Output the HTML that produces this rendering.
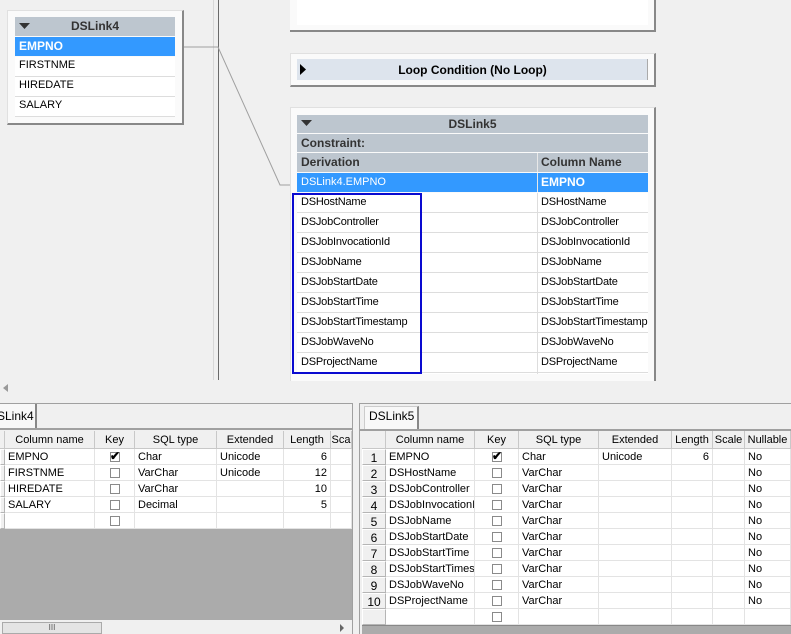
<!DOCTYPE html>
<html><head><meta charset="utf-8"><style>
*{margin:0;padding:0;box-sizing:border-box}
body{width:791px;height:634px;background:#f0f0f0;font-family:"Liberation Sans",sans-serif;font-size:11px;color:#000;position:relative;overflow:hidden}
.a{position:absolute}
.t{position:absolute;white-space:nowrap;line-height:20px}
.cell{position:absolute;height:16px;line-height:16px;white-space:nowrap;overflow:hidden;padding-left:3px;border-right:1px solid #e3e3e3;border-bottom:1px solid #e3e3e3;background:#fff}
.hd{position:absolute;height:18px;line-height:18px;text-align:center;white-space:nowrap;overflow:hidden;background:#f0f0f0;border-right:1px solid #c8c8c8;border-bottom:1px solid #c8c8c8}
.rn{position:absolute;height:16px;line-height:16px;text-align:center;background:#f0f0f0;border:1px solid #b5b5b5;border-top-color:#fff;border-left-color:#fff;font-size:12px}
.cb{position:absolute;width:10px;height:10px;border:1px solid #8a8a8a;background:#fff}
.f{font-size:11px}
</style></head><body>
<div class="a" style="left:213px;top:0;width:1px;height:380px;background:#d8d8d8"></div>
<div class="a" style="left:218px;top:0;width:1px;height:380px;background:#6a6a6a"></div>
<svg class="a" style="left:0;top:0" width="791" height="380"><polyline points="183,47 218,47 280,185 297,185" fill="none" stroke="#a0a0a0" stroke-width="1"/></svg>

<div class="a" style="left:7px;top:10px;width:177px;height:115px;background:#fafafa;border:1px solid #e0e0e0;border-right:2px solid #888;border-bottom:2px solid #888"></div>
<div class="a" style="left:15px;top:17px;width:160px;height:19px;background:#bdc6cf"></div>
<svg class="a" style="left:19px;top:23px" width="12" height="8"><polygon points="0,0 11,0 5.5,6" fill="#333"/></svg>
<div class="t" style="left:15px;top:16px;width:160px;text-align:center;font-weight:bold;color:#333;font-size:12px">DSLink4</div>
<div class="a" style="left:15px;top:37px;width:160px;height:19px;background:#3399ff"></div>
<div class="t" style="left:19px;top:36px;color:#fff;font-weight:bold;font-size:12px">EMPNO</div>
<div class="a" style="left:15px;top:57px;width:160px;height:60px;background:#fff"></div>
<div class="a" style="left:15px;top:76px;width:160px;height:1px;background:#ddd"></div>
<div class="a" style="left:15px;top:96px;width:160px;height:1px;background:#ddd"></div>
<div class="a" style="left:15px;top:116px;width:160px;height:1px;background:#ddd"></div>
<div class="t f" style="left:19px;top:55px">FIRSTNME</div>
<div class="t f" style="left:19px;top:75px">HIREDATE</div>
<div class="t f" style="left:19px;top:95px">SALARY</div>

<div class="a" style="left:290px;top:-2px;width:366px;height:34px;background:#fafafa;border-right:2px solid #888;border-bottom:2px solid #888"></div>
<div class="a" style="left:297px;top:0;width:351px;height:25px;background:#fff"></div>

<div class="a" style="left:290px;top:53px;width:366px;height:34px;background:#fafafa;border:1px solid #e0e0e0;border-right:2px solid #888;border-bottom:2px solid #888"></div>
<div class="a" style="left:297px;top:59px;width:351px;height:21px;background:#dde4ed;border-right:1px solid #aaa"></div>
<svg class="a" style="left:300px;top:64px" width="8" height="12"><polygon points="0,0 6,5.5 0,11" fill="#000"/></svg>
<div class="t" style="left:297px;top:60px;width:351px;text-align:center;font-weight:bold;font-size:12px">Loop Condition (No Loop)</div>

<div class="a" style="left:290px;top:107px;width:366px;height:274px;background:#fafafa;border:1px solid #e0e0e0;border-right:2px solid #888;border-bottom:none"></div>
<div class="a" style="left:297px;top:115px;width:351px;height:18px;background:#bdc6cf"></div>
<svg class="a" style="left:301px;top:120px" width="12" height="8"><polygon points="0,0 11,0 5.5,6" fill="#333"/></svg>
<div class="t" style="left:297px;top:114px;width:351px;text-align:center;font-weight:bold;color:#333;font-size:12px">DSLink5</div>
<div class="a" style="left:297px;top:134px;width:351px;height:18px;background:#bdc6cf"></div>
<div class="t" style="left:301px;top:133px;font-weight:bold;color:#333;font-size:12px">Constraint:</div>
<div class="a" style="left:297px;top:153px;width:351px;height:19px;background:#bdc6cf"></div>
<div class="a" style="left:537px;top:153px;width:1px;height:19px;background:#e8e8e8"></div>
<div class="t" style="left:301px;top:152px;font-weight:bold;color:#333;font-size:12px">Derivation</div>
<div class="t" style="left:541px;top:152px;font-weight:bold;color:#333;font-size:12px">Column Name</div>
<div class="a" style="left:297px;top:173px;width:351px;height:19px;background:#3399ff"></div>
<div class="a" style="left:537px;top:173px;width:1px;height:19px;background:#e8e8e8"></div>
<div class="t f" style="left:301px;top:172px;color:#fff">DSLink4.EMPNO</div>
<div class="t" style="left:541px;top:172px;color:#fff;font-weight:bold;font-size:12px">EMPNO</div>
<div class="a" style="left:297px;top:193px;width:351px;height:181px;background:#fff"></div>
<div class="a" style="left:537px;top:193px;width:1px;height:181px;background:#ddd"></div>
<div class="a" style="left:292px;top:193px;width:130px;height:181px;border:2px solid #0a0ad0;z-index:5"></div>

<svg class="a" style="left:3px;top:384px" width="6" height="8"><polygon points="5,0 0,4 5,8" fill="#999"/></svg>

<div class="a" style="left:0;top:403px;width:353px;height:231px;background:#f0f0f0;border-top:1px solid #a0a0a0;border-right:1px solid #a0a0a0"></div>
<div class="a" style="left:0;top:404px;width:37px;height:24px;background:#f8f8f8;border-right:2px solid #888"></div>
<div class="t" style="left:-3px;top:406px;font-size:12px">SLink4</div>
<div class="a" style="left:0;top:428px;width:352px;height:2px;background:#a0a0a0"></div>
<div class="a" style="left:0;top:431px;width:352px;height:96px;background:#fff"></div>
<div class="a" style="left:0;top:527px;width:352px;height:93px;background:#ababab;border-top:1px solid #888"></div>
<div class="a" style="left:0;top:621px;width:352px;height:13px;background:#f0f0f0"></div>
<div class="a" style="left:2px;top:622px;width:100px;height:12px;background:#e4e4e4;border:1px solid #aaa;text-align:center;line-height:10px;font-size:8px;color:#555">III</div>
<svg class="a" style="left:340px;top:624px" width="5" height="8"><polygon points="0,0 4,4 0,8" fill="#666"/></svg>

<div class="a" style="left:359px;top:403px;width:432px;height:231px;background:#f0f0f0;border-top:1px solid #a0a0a0;border-left:1px solid #a0a0a0"></div>
<div class="a" style="left:364px;top:406px;width:55px;height:24px;background:#f8f8f8;border:1px solid #ccc;border-right:2px solid #888"></div>
<div class="t" style="left:369px;top:406px;font-size:12px">DSLink5</div>
<div class="a" style="left:360px;top:429px;width:431px;height:2px;background:#a0a0a0"></div>
<div class="a" style="left:362px;top:431px;width:429px;height:194px;background:#fff"></div>
<div class="a" style="left:362px;top:625px;width:429px;height:9px;background:#ababab;border-top:1px solid #888"></div>

<script>
function add(h){document.body.insertAdjacentHTML('beforeend',h)}
var d=["DSHostName","DSJobController","DSJobInvocationId","DSJobName","DSJobStartDate","DSJobStartTime","DSJobStartTimestamp","DSJobWaveNo","DSProjectName"];
d.forEach(function(n,i){var y=193+i*20;
add('<div class="t f" style="left:301px;top:'+(y-1)+'px;letter-spacing:-0.2px">'+n+'</div><div class="t f" style="left:541px;top:'+(y-1)+'px;letter-spacing:-0.2px">'+n+'</div><div class="a" style="left:297px;top:'+(y+19)+'px;width:351px;height:1px;background:#ddd"></div>')});

function grid(cols,hy,rows,rx,rw,nums){
 cols.forEach(function(c){add('<div class="hd" style="left:'+c[0]+'px;top:'+hy+'px;width:'+c[1]+'px">'+c[2]+'</div>')});
 add('<div class="hd" style="left:'+rx+'px;top:'+hy+'px;width:'+rw+'px"></div>');
 rows.forEach(function(r,i){var y=hy+18+i*16;
  add('<div class="rn" style="left:'+rx+'px;top:'+y+'px;width:'+rw+'px">'+(nums&&r[0]?i+1:'')+'</div>');
  cols.forEach(function(c,j){var v=r[j]||'';var al=(c[3]?'text-align:right;padding-right:3px;':'');
   add('<div class="cell" style="left:'+c[0]+'px;top:'+y+'px;width:'+c[1]+'px;'+al+'">'+(j==1?'':v)+'</div>');
   if(j==1){add('<div class="cb" style="left:'+(c[0]+c[1]/2-5)+'px;top:'+(y+3)+'px"></div>');
    if(v=='x')add('<div class="a" style="left:'+(c[0]+c[1]/2-5)+'px;top:'+(y+1)+'px;font-size:12px;line-height:12px;font-weight:bold">✔</div>')}
  })})
}
grid([[5,90,"Column name"],[95,40,"Key"],[135,82,"SQL type"],[217,67,"Extended"],[284,47,"Length",1],[331,21,"Sca"]],431,
 [["EMPNO","x","Char","Unicode","6",""],["FIRSTNME","","VarChar","Unicode","12",""],["HIREDATE","","VarChar","","10",""],["SALARY","","Decimal","","5",""],["","","","","",""]],0,5,false);
var R=[["EMPNO","x","Char","Unicode","6","","No"]];
["DSHostName","DSJobController","DSJobInvocationI","DSJobName","DSJobStartDate","DSJobStartTime","DSJobStartTimest","DSJobWaveNo","DSProjectName"].forEach(function(n){R.push([n,"","VarChar","","","","No"])});
R.push(["","","","","","",""]);
grid([[386,89,"Column name"],[475,44,"Key"],[519,80,"SQL type"],[599,73,"Extended"],[672,41,"Length",1],[713,32,"Scale"],[745,46,"Nullable"]],431,R,362,24,true);
</script>
</body></html>
